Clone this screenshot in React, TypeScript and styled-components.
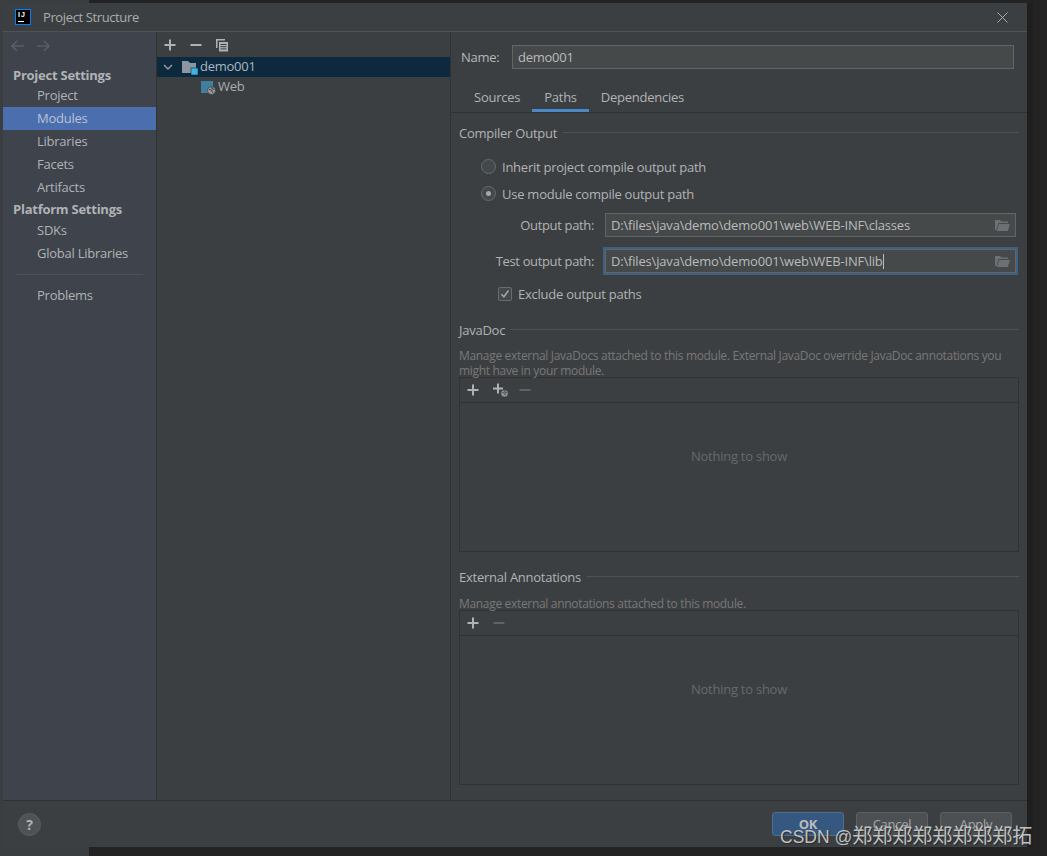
import React from "react";
import styled, { createGlobalStyle } from "styled-components";

const GlobalStyle = createGlobalStyle`
  html, body {
    margin: 0;
    padding: 0;
    height: 856px;
    overflow: hidden;
    background: linear-gradient(to right, #3b3e40 89px, #232323 89px);
    font-family: "Open Sans", "Liberation Sans", sans-serif;
    font-size: 13px;
    letter-spacing: -0.25px;
    color: #bbbbbb;
  }
`;

const Page = styled.div`
  position: relative;
  width: 1047px;
  height: 856px;
  padding: 3px 0 0 3px;
  box-sizing: border-box;
`;

const Dialog = styled.div`
  width: 1024px;
  height: 844px;
  background: #3c3f41;
  display: flex;
  flex-direction: column;
  box-shadow: 6px 0 0 #1e1e1e;
`;

const TitleBar = styled.div`
  height: 28px;
  flex: none;
  display: flex;
  align-items: center;
  padding: 0 19px 0 12px;
  border-bottom: 1px solid #505354;
  box-sizing: content-box;
`;

const Logo = styled.div`
  width: 12px;
  height: 14px;
  padding-left: 2px;
  background: #000;
  border: 1px solid #087cfa;
  color: #fff;
  font-family: "Liberation Sans", sans-serif;
  font-size: 7px;
  font-weight: 700;
  line-height: 9px;
  letter-spacing: 1px;
  position: relative;
  &::after {
    content: "";
    position: absolute;
    left: 2px;
    bottom: 2px;
    width: 6px;
    height: 1px;
    background: #fff;
  }
`;

const WindowTitle = styled.div`
  margin-left: 12px;
  flex: 1;
  letter-spacing: -0.38px;
  color: #a9adaf;
`;

const Body = styled.div`
  flex: 1;
  display: flex;
  min-height: 0;
`;

const Sidebar = styled.div`
  width: 153px;
  flex: none;
  background: #3e434c;
  border-right: 1px solid #323232;
`;

const NavArrows = styled.div`
  height: 28px;
  display: flex;
  align-items: center;
  gap: 11px;
  padding-left: 7px;
`;

const NavHeader = styled.div<{ $first?: boolean }>`
  height: ${(props) => (props.$first ? 24 : 20)}px;
  box-sizing: border-box;
  padding: ${(props) => (props.$first ? "5px" : "0")} 0 0 10px;
  line-height: 20px;
  font-weight: 700;
  color: #b0b3b5;
`;

const NavItem = styled.div<{ $active?: boolean }>`
  height: 23px;
  line-height: 23px;
  padding-left: 34px;
  background: ${(props) => (props.$active ? "#4b6eaf" : "transparent")};
  color: ${(props) => (props.$active ? "#b9c3d2" : "#b0b3b5")};
`;

const NavSeparator = styled.div`
  height: 1px;
  background: #4e5258;
  margin: 9px 13px 9px 14px;
`;

const TreePanel = styled.div`
  width: 293px;
  flex: none;
  border-right: 1px solid #323232;
`;

const TreeToolbar = styled.div`
  height: 25px;
  display: flex;
  align-items: center;
  gap: 12px;
  padding-left: 6px;
`;

const TreeRow = styled.div<{ $selected?: boolean; $indent: number }>`
  height: 20px;
  display: flex;
  align-items: center;
  padding-left: ${(props) => props.$indent}px;
  background: ${(props) => (props.$selected ? "#0d293e" : "transparent")};
  color: ${(props) => (props.$selected ? "#a9b6c0" : "#a8abad")};
`;

const TreeLabel = styled.span`
  margin-left: 2px;
  line-height: 18px;
  margin-bottom: 2px;
`;

const Content = styled.div`
  flex: 1;
  min-width: 0;
`;

const NameRow = styled.div`
  display: flex;
  align-items: center;
  padding: 13px 0 0 10px;
`;

const NameLabel = styled.span`
  width: 51px;
  color: #b3b8bb;
`;

const NameInput = styled.div`
  width: 502px;
  height: 24px;
  box-sizing: border-box;
  border: 1px solid #646464;
  background: #45494a;
  padding-left: 5px;
  line-height: 22px;
`;

const Tabs = styled.div`
  display: flex;
  height: 27px;
  margin-top: 16px;
  padding-left: 11px;
  border-bottom: 1px solid #323232;
`;

const Tab = styled.div<{ $active?: boolean }>`
  padding: 0 12px;
  height: 27px;
  line-height: 25px;
  box-sizing: border-box;
  color: #b0b3b5;
  border-bottom: ${(props) => (props.$active ? "3px solid #4a88c7" : "none")};
`;

const Form = styled.div`
  padding: 11px 8px 0;
`;

const SectionTitle = styled.div<{ $top?: number }>`
  display: flex;
  align-items: center;
  gap: 6px;
  height: 17px;
  margin-top: ${(props) => props.$top ?? 0}px;
  color: #b0b3b5;
  &::after {
    content: "";
    flex: 1;
    height: 1px;
    background: #515151;
  }
`;

const OptionRow = styled.div<{ $left: number; $top?: number }>`
  display: flex;
  align-items: center;
  height: 27px;
  padding-left: ${(props) => props.$left}px;
  margin-top: ${(props) => props.$top ?? 0}px;
  color: #b0b3b5;
`;

const Radio = styled.span<{ $checked?: boolean }>`
  width: 15px;
  height: 15px;
  box-sizing: border-box;
  border-radius: 50%;
  border: 1px solid #686b6d;
  background: #43494a;
  margin-right: 6px;
  display: flex;
  align-items: center;
  justify-content: center;
  &::after {
    content: "";
    display: ${(props) => (props.$checked ? "block" : "none")};
    width: 5px;
    height: 5px;
    border-radius: 50%;
    background: #a7a7a7;
  }
`;

const Checkbox = styled.span`
  width: 14px;
  height: 14px;
  box-sizing: border-box;
  border: 1px solid #6b6b6b;
  border-radius: 2px;
  background: #43494a;
  margin-right: 6px;
  display: flex;
  align-items: center;
  justify-content: center;
`;

const PathRow = styled.div<{ $top: number }>`
  display: flex;
  align-items: center;
  margin-top: ${(props) => props.$top}px;
  height: 24px;
`;

const PathLabel = styled.span`
  width: 135px;
  text-align: right;
  letter-spacing: -0.35px;
  color: #b0b3b5;
`;

const PathInput = styled.div<{ $focused?: boolean }>`
  width: 411px;
  height: 24px;
  box-sizing: border-box;
  margin-left: 11px;
  padding: 0 5px;
  display: flex;
  align-items: center;
  justify-content: space-between;
  letter-spacing: -0.18px;
  background: #45494a;
  border: 1px solid #646464;
  outline: ${(props) => (props.$focused ? "2px solid #3d6185" : "none")};
  outline-offset: 0;
`;

const Caret = styled.span`
  display: inline-block;
  width: 1px;
  height: 15px;
  background: #bbbbbb;
  vertical-align: -3px;
`;

const Description = styled.div<{ $top: number }>`
  margin-top: ${(props) => props.$top}px;
  margin-bottom: -1px;
  font-size: 12px;
  line-height: 15px;
  letter-spacing: -0.32px;
  color: #787878;
`;

const TableBox = styled.div`
  height: 175px;
  box-sizing: border-box;
  border: 1px solid #323232;
  display: flex;
  flex-direction: column;
`;

const TableToolbar = styled.div`
  height: 25px;
  flex: none;
  box-sizing: border-box;
  border-bottom: 1px solid #323232;
  display: flex;
  align-items: center;
  gap: 12px;
  padding-left: 6px;
`;

const EmptyText = styled.div`
  flex: 1;
  display: flex;
  align-items: center;
  justify-content: center;
  padding-bottom: 43px;
  color: #66696b;
`;

const Footer = styled.div`
  height: 46px;
  flex: none;
  border-top: 1px solid #323232;
  display: flex;
  align-items: center;
  padding: 0 15px;
  box-sizing: content-box;
`;

const HelpButton = styled.div`
  width: 23px;
  height: 23px;
  border-radius: 50%;
  background: #505356;
  border: 1px solid #5b5e60;
  box-sizing: border-box;
  color: #b4b4b4;
  font-weight: 700;
  font-size: 14px;
  text-align: center;
  line-height: 21px;
`;

const Spacer = styled.div`
  flex: 1;
`;

const Button = styled.div<{ $primary?: boolean }>`
  width: 72px;
  height: 24px;
  box-sizing: border-box;
  margin-left: 12px;
  border-radius: 3px;
  border: 1px solid ${(props) => (props.$primary ? "#4c708c" : "#5e6060")};
  background: ${(props) => (props.$primary ? "#365880" : "#4c5052")};
  color: ${(props) => (props.$primary ? "#bbbbbb" : "#a4a6a8")};
  font-weight: ${(props) => (props.$primary ? 700 : 400)};
  text-align: center;
  line-height: 22px;
`;

const Watermark = styled.div`
  position: absolute;
  left: 780px;
  top: 823px;
  font-family: "Liberation Sans", "Noto Sans CJK SC", sans-serif;
  font-size: 20px;
  line-height: 26px;
  letter-spacing: 0;
  white-space: nowrap;
  color: #bfc1c2;
  text-shadow: 1px 1px 1px #2a2a2a;
`;

const WatermarkLatin = styled.span`
  font-size: 17.5px;
`;

const Plus = ({ dim }: { dim?: boolean }) => (
  <svg width="14" height="14" viewBox="0 0 14 14">
    <path d="M7 1.5v11M1.5 7h11" stroke={dim ? "#5f6264" : "#afb1b3"} strokeWidth="2" fill="none" />
  </svg>
);

const Minus = ({ dim }: { dim?: boolean }) => (
  <svg width="14" height="14" viewBox="0 0 14 14">
    <path d="M1.5 7h11" stroke={dim ? "#5f6264" : "#afb1b3"} strokeWidth="2" fill="none" />
  </svg>
);

const CopyIcon = () => (
  <svg width="14" height="14" viewBox="0 0 14 14">
    <path d="M1 1h9v1.5H2.5V10H1z" fill="#afb1b3" />
    <path d="M4 4h9v9.5H4z" fill="#afb1b3" />
    <path d="M5.5 6.5h6M5.5 8.7h6M5.5 10.9h6" stroke="#3c3f41" strokeWidth="1" />
  </svg>
);

const PlusWeb = () => (
  <svg width="14" height="16" viewBox="0 0 14 16" overflow="visible">
    <path d="M6 1.5v10M1 6.5h10" stroke="#afb1b3" strokeWidth="2" fill="none" />
    <circle cx="12.5" cy="11.5" r="3.3" fill="#8f9294" />
    <path d="M10.5 10.5l2 .5 1 2M12.5 8.6l.5 1.6 1.8.3" stroke="#3c3f41" strokeWidth="0.9" fill="none" />
  </svg>
);

const Arrow = ({ right }: { right?: boolean }) => (
  <svg width="15" height="14" viewBox="0 0 15 14">
    <path
      d={right ? "M1 7h12M8 2l5 5-5 5" : "M14 7H2M7 2L2 7l5 5"}
      stroke="#5b5f63"
      strokeWidth="1.6"
      fill="none"
    />
  </svg>
);

const Chevron = () => (
  <svg width="12" height="12" viewBox="0 0 12 12">
    <path d="M2 4l4 4 4-4" stroke="#9da0a2" strokeWidth="1.3" fill="none" />
  </svg>
);

const ModuleIcon = () => (
  <svg width="16" height="15" viewBox="0 0 16 15" style={{ marginLeft: 8 }}>
    <path d="M0 1h6l2 2h6v10H0z" fill="#8a97a3" />
    <rect x="9" y="8" width="7" height="7" fill="#3fb4e0" stroke="#0d293e" strokeWidth="0.6" />
  </svg>
);

const WebIcon = () => (
  <svg width="15" height="15" viewBox="0 0 15 15">
    <rect x="0" y="1" width="12" height="12" fill="#3f7f9f" />
    <circle cx="10.5" cy="10.5" r="4" fill="#9a9c9e" stroke="#3c3f41" strokeWidth="0.8" />
    <path d="M8 9.5l2.5.6 1.2 2.6M10.5 7l.6 2 2.2.4" stroke="#3c3f41" strokeWidth="1" fill="none" />
  </svg>
);

const FolderIcon = () => (
  <svg width="15" height="12" viewBox="0 0 15 12">
    <path d="M0 1h5l1.5 1.5H13V4H3.5L1.5 11H0z" fill="#6c7072" />
    <path d="M4 5h11l-2.2 7H1.8z" fill="#6c7072" />
  </svg>
);

const CheckMark = () => (
  <svg width="10" height="10" viewBox="0 0 10 10">
    <path d="M1.5 5.2l2.4 2.6L8.5 1.5" stroke="#a7a7a7" strokeWidth="1.5" fill="none" />
  </svg>
);

const CloseIcon = () => (
  <svg width="11" height="11" viewBox="0 0 11 11">
    <path d="M.5.5l10 10M10.5.5l-10 10" stroke="#a9abad" strokeWidth="1" fill="none" />
  </svg>
);

function App() {
  return (
    <Page>
      <GlobalStyle />
      <Dialog>
        <TitleBar>
          <Logo>IJ</Logo>
          <WindowTitle>Project Structure</WindowTitle>
          <CloseIcon />
        </TitleBar>
        <Body>
          <Sidebar>
            <NavArrows>
              <Arrow />
              <Arrow right />
            </NavArrows>
            <NavHeader $first>Project Settings</NavHeader>
            <NavItem>Project</NavItem>
            <NavItem $active>Modules</NavItem>
            <NavItem>Libraries</NavItem>
            <NavItem>Facets</NavItem>
            <NavItem>Artifacts</NavItem>
            <NavHeader>Platform Settings</NavHeader>
            <NavItem>SDKs</NavItem>
            <NavItem>Global Libraries</NavItem>
            <NavSeparator />
            <NavItem>Problems</NavItem>
          </Sidebar>
          <TreePanel>
            <TreeToolbar>
              <Plus />
              <Minus />
              <CopyIcon />
            </TreeToolbar>
            <TreeRow $selected $indent={5}>
              <Chevron />
              <ModuleIcon />
              <TreeLabel>demo001</TreeLabel>
            </TreeRow>
            <TreeRow $indent={44}>
              <WebIcon />
              <TreeLabel>Web</TreeLabel>
            </TreeRow>
          </TreePanel>
          <Content>
            <NameRow>
              <NameLabel>Name:</NameLabel>
              <NameInput>demo001</NameInput>
            </NameRow>
            <Tabs>
              <Tab>Sources</Tab>
              <Tab $active>Paths</Tab>
              <Tab>Dependencies</Tab>
            </Tabs>
            <Form>
              <SectionTitle>Compiler Output</SectionTitle>
              <OptionRow $left={22} $top={12}>
                <Radio />
                Inherit project compile output path
              </OptionRow>
              <OptionRow $left={22}>
                <Radio $checked />
                Use module compile output path
              </OptionRow>
              <PathRow $top={6}>
                <PathLabel>Output path:</PathLabel>
                <PathInput>
                  <span>D:\files\java\demo\demo001\web\WEB-INF\classes</span>
                  <FolderIcon />
                </PathInput>
              </PathRow>
              <PathRow $top={12}>
                <PathLabel>Test output path:</PathLabel>
                <PathInput $focused>
                  <span>
                    D:\files\java\demo\demo001\web\WEB-INF\lib
                    <Caret />
                  </span>
                  <FolderIcon />
                </PathInput>
              </PathRow>
              <OptionRow $left={39} $top={7}>
                <Checkbox>
                  <CheckMark />
                </Checkbox>
                Exclude output paths
              </OptionRow>
              <SectionTitle $top={14}>JavaDoc</SectionTitle>
              <Description $top={10}>
                Manage external JavaDocs attached to this module. External JavaDoc override JavaDoc annotations you
                <br />
                might have in your module.
              </Description>
              <TableBox>
                <TableToolbar>
                  <Plus />
                  <PlusWeb />
                  <Minus dim />
                </TableToolbar>
                <EmptyText>Nothing to show</EmptyText>
              </TableBox>
              <SectionTitle $top={16}>External Annotations</SectionTitle>
              <Description $top={11}>Manage external annotations attached to this module.</Description>
              <TableBox>
                <TableToolbar>
                  <Plus />
                  <Minus dim />
                </TableToolbar>
                <EmptyText>Nothing to show</EmptyText>
              </TableBox>
            </Form>
          </Content>
        </Body>
        <Footer>
          <HelpButton>?</HelpButton>
          <Spacer />
          <Button $primary>OK</Button>
          <Button>Cancel</Button>
          <Button>Apply</Button>
        </Footer>
      </Dialog>
      <Watermark>
        <WatermarkLatin>CSDN @</WatermarkLatin>郑郑郑郑郑郑郑郑拓
      </Watermark>
    </Page>
  );
}

export default App;
